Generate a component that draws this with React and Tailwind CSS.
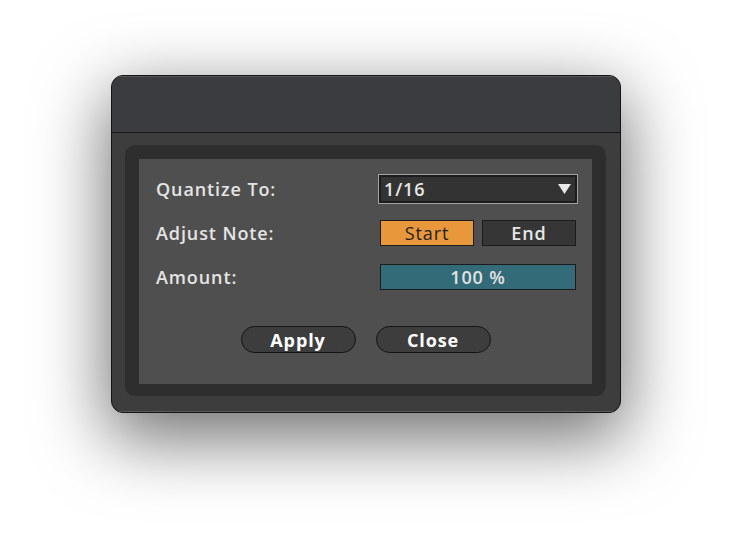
export default function App() {
  const font = { fontFamily: "'Open Sans', 'Noto Sans', sans-serif" };
  return (
    <div className="w-[732px] h-[560px] bg-white overflow-hidden pt-[75px]" style={font}>
      <div className="mx-auto w-[510px] h-[338px] rounded-[12px] border border-[#141414] bg-[#3d3d3d] shadow-[0_22px_70px_4px_rgba(0,0,0,0.56)] overflow-hidden flex flex-col">
        <div className="h-[57px] shrink-0 bg-[#3b3c40] border-b border-[#151515] shadow-[inset_0_1px_0_#55565a]" />
        <div className="flex-1 pl-[13px] pt-[12px] shadow-[inset_0_-1px_0_#5a5a5a]">
          <div className="w-[481px] h-[251px] rounded-[10px] bg-[#2e2e2e] pl-[14px] pt-[14px]">
            <div className="w-[453px] h-[225px] bg-[#4f4f4f] pl-[17px] pt-[15px] text-[18px] tracking-[0.05em] text-[#e4e4e4] font-semibold">
              <div className="flex items-center h-[30px]">
                <div className="w-[222px] leading-none">Quantize To:</div>
                <div className="w-[200px] h-[30px] border border-[#a3a3a3] bg-[#333333] shadow-[inset_0_0_0_2px_#1c1c1c] flex items-center justify-between pl-[5px] pr-[6px]">
                  <span className="leading-none text-[#e6e6e6]">1/16</span>
                  <svg width="13" height="10" viewBox="0 0 13 10">
                    <polygon points="0,0 13,0 6.5,10" fill="#e8e8e8" />
                  </svg>
                </div>
              </div>
              <div className="flex items-center h-[26px] mt-[16px]">
                <div className="w-[224px] leading-none">Adjust Note:</div>
                <div className="w-[94px] h-[26px] border border-[#1c1c1c] bg-[#e8983b] text-[#1e1e1e] font-medium flex items-center justify-center leading-none">Start</div>
                <div className="ml-[8px] w-[94px] h-[26px] border border-[#1c1c1c] bg-[#363636] text-[#e6e6e6] flex items-center justify-center leading-none">End</div>
              </div>
              <div className="flex items-center h-[26px] mt-[18px]">
                <div className="w-[224px] leading-none">Amount:</div>
                <div className="w-[196px] h-[26px] border border-[#1c1c1c] bg-[#346b79] text-[#e2e2e2] flex items-center justify-center leading-none">100 %</div>
              </div>
              <div className="flex justify-center gap-[20px] mt-[36px] pr-[17px]">
                <div className="w-[115px] h-[27px] rounded-full border border-[#141414] bg-[#3d3d3d] text-white font-bold flex items-center justify-center leading-none">Apply</div>
                <div className="w-[115px] h-[27px] rounded-full border border-[#141414] bg-[#3d3d3d] text-white font-bold flex items-center justify-center leading-none">Close</div>
              </div>
            </div>
          </div>
        </div>
      </div>
    </div>
  );
}
